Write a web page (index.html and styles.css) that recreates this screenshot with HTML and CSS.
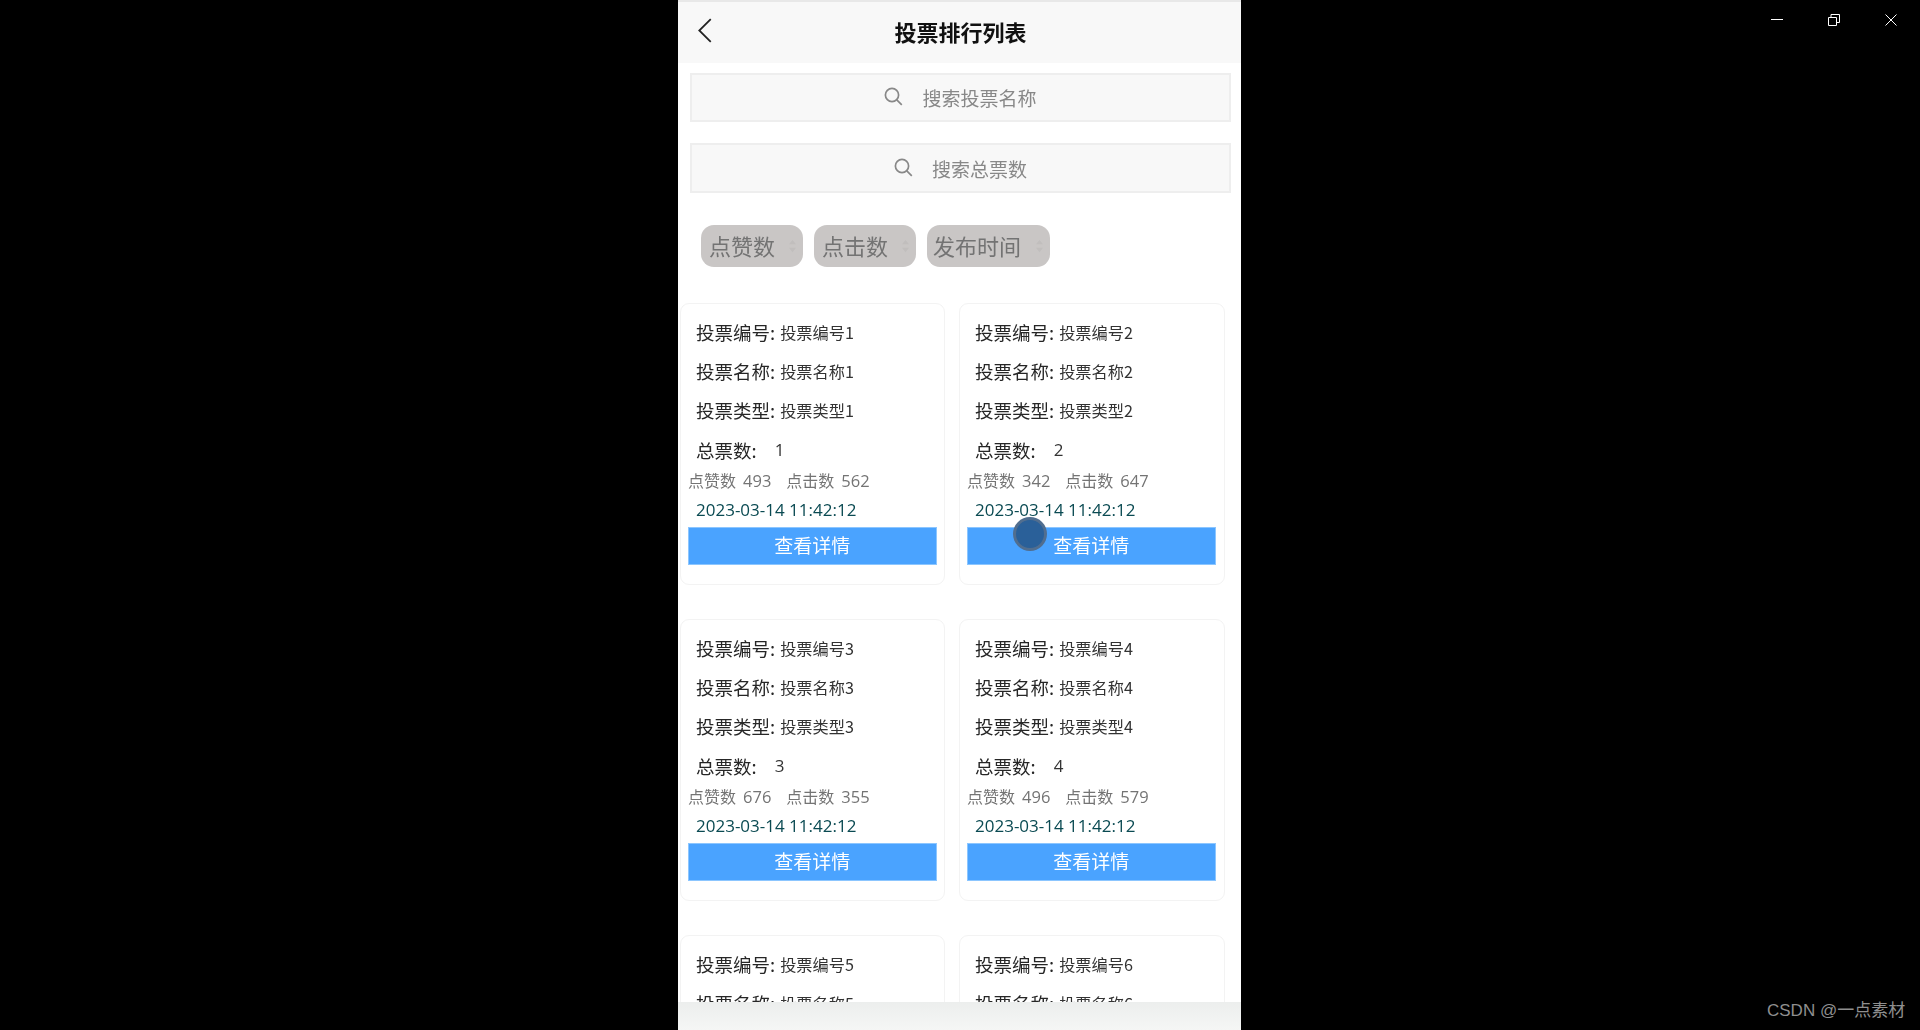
FILE: index.html
```html
<!DOCTYPE html>
<html lang="zh-CN">
<head>
<meta charset="utf-8">
<title>投票排行列表</title>
<link rel="stylesheet" href="styles.css">
</head>
<body>
<div class="stage">
  <main class="phone">
    <div class="scroll">
      <header class="navbar">
        <svg class="back" viewBox="0 0 14 24"><path d="M13 1 2 12l11 11"/></svg>
        <h1>投票排行列表</h1>
      </header>
      <div class="search first">
        <svg class="glass" viewBox="0 0 19 19"><circle cx="8" cy="8" r="6.6"/><path d="m12.8 12.8 5 5"/></svg>
        <span>搜索投票名称</span>
      </div>
      <div class="search second">
        <svg class="glass" viewBox="0 0 19 19"><circle cx="8" cy="8" r="6.6"/><path d="m12.8 12.8 5 5"/></svg>
        <span>搜索总票数</span>
      </div>
      <div class="chips">
        <div class="chip w1">点赞数<svg class="sort" viewBox="0 0 10 16"><path d="M5 1 9 6H1zM5 15 1 10h8z"/></svg></div>
        <div class="chip w1">点击数<svg class="sort" viewBox="0 0 10 16"><path d="M5 1 9 6H1zM5 15 1 10h8z"/></svg></div>
        <div class="chip w2">发布时间<svg class="sort" viewBox="0 0 10 16"><path d="M5 1 9 6H1zM5 15 1 10h8z"/></svg></div>
      </div>
      <section class="grid">
        <article class="card">
          <div class="row"><b>投票编号:</b><span>投票编号1</span></div>
          <div class="row"><b>投票名称:</b><span>投票名称1</span></div>
          <div class="row"><b>投票类型:</b><span>投票类型1</span></div>
          <div class="row total"><b>总票数:</b><span>1</span></div>
          <div class="stats"><span>点赞数</span><span class="num">493</span><span>点击数</span><span class="num">562</span></div>
          <div class="date">2023-03-14 11:42:12</div>
          <button class="detail">查看详情</button>
        </article>
        <article class="card">
          <div class="row"><b>投票编号:</b><span>投票编号2</span></div>
          <div class="row"><b>投票名称:</b><span>投票名称2</span></div>
          <div class="row"><b>投票类型:</b><span>投票类型2</span></div>
          <div class="row total"><b>总票数:</b><span>2</span></div>
          <div class="stats"><span>点赞数</span><span class="num">342</span><span>点击数</span><span class="num">647</span></div>
          <div class="date">2023-03-14 11:42:12</div>
          <button class="detail">查看详情</button>
          <i class="touch"></i>
        </article>
        <article class="card">
          <div class="row"><b>投票编号:</b><span>投票编号3</span></div>
          <div class="row"><b>投票名称:</b><span>投票名称3</span></div>
          <div class="row"><b>投票类型:</b><span>投票类型3</span></div>
          <div class="row total"><b>总票数:</b><span>3</span></div>
          <div class="stats"><span>点赞数</span><span class="num">676</span><span>点击数</span><span class="num">355</span></div>
          <div class="date">2023-03-14 11:42:12</div>
          <button class="detail">查看详情</button>
        </article>
        <article class="card">
          <div class="row"><b>投票编号:</b><span>投票编号4</span></div>
          <div class="row"><b>投票名称:</b><span>投票名称4</span></div>
          <div class="row"><b>投票类型:</b><span>投票类型4</span></div>
          <div class="row total"><b>总票数:</b><span>4</span></div>
          <div class="stats"><span>点赞数</span><span class="num">496</span><span>点击数</span><span class="num">579</span></div>
          <div class="date">2023-03-14 11:42:12</div>
          <button class="detail">查看详情</button>
        </article>
        <article class="card">
          <div class="row"><b>投票编号:</b><span>投票编号5</span></div>
          <div class="row"><b>投票名称:</b><span>投票名称5</span></div>
        </article>
        <article class="card">
          <div class="row"><b>投票编号:</b><span>投票编号6</span></div>
          <div class="row"><b>投票名称:</b><span>投票名称6</span></div>
        </article>
      </section>
    </div>
    <div class="tabbar"></div>
  </main>
</div>
<div class="winctl">
  <svg viewBox="0 0 12 12"><path d="M0 5.500h12"/></svg>
  <svg viewBox="0 0 12 12"><path d="M.5 3.5h8v8h-8zM3 3.5V.5h8.500v8h-3"/></svg>
  <svg viewBox="0 0 12 12"><path d="m.5.500 11 11M11.500.500l-11 11"/></svg>
</div>
<div class="mark">CSDN @一点素材</div>
</body>
</html>
```
FILE: styles.css
```css
* { box-sizing: border-box; }
html, body { margin: 0; height: 100%; background: #000; overflow: hidden; }
body { font-family: "Open Sans", "Noto Sans CJK SC", sans-serif; }

.stage { display: flex; justify-content: center; height: 1030px; padding-right: 1px; }
.phone { width: 563px; height: 1030px; background: #fff; display: flex; flex-direction: column; filter: blur(0.35px); }
.scroll { flex: 1; min-height: 0; overflow: hidden; }
.tabbar { height: 28px; background: linear-gradient(#eceeed, #f5f6f5); }

.navbar { height: 63px; background: #f8f8f8; border-top: 2px solid #e8e8e8; display: flex; align-items: center; justify-content: center; position: relative; }
.navbar h1 { margin: 0; font-size: 22px; font-weight: 700; color: #111; line-height: 1; transform: translate(1px, -1px); }
.back { position: absolute; left: 19px; top: 16px; width: 15px; height: 25px; fill: none; stroke: #222; stroke-width: 1.7; }

.search { height: 49px; margin: 10px 10px 0 12px; background: #f8f8f8; border: 2px solid #eeeeee; display: flex; align-items: center; justify-content: center; gap: 19px; color: #888; font-size: 19px; font-family: "Noto Sans CJK SC", sans-serif; }
.search.second { height: 50px; margin-top: 21px; }
.glass { width: 19px; height: 19px; fill: none; stroke: #888; stroke-width: 1.7; transform: translateY(-1px); }

.chips { display: flex; gap: 11px; padding: 32px 0 0 23px; }
.chip { height: 42px; border-radius: 13px; background: #c9c6c5; color: #737373; font-size: 22px; line-height: 42px; padding: 0 0 2px 8px; font-family: "Noto Sans CJK SC", sans-serif; display: flex; align-items: center; position: relative; }
.chip.w1 { width: 102px; }
.chip.w2 { width: 123px; padding-left: 6px; }
.sort { position: absolute; right: 6px; top: 14px; width: 9px; height: 14px; fill: #c1bebd; }

.grid { display: grid; grid-template-columns: 265px 266px; column-gap: 14px; row-gap: 34px; padding: 36px 0 0 2px; }
.card { position: relative; height: 282px; border: 1px solid #f3f3f3; border-radius: 9px; background: #fff; padding: 8px 0 0 7px; }
.row { height: 39.3px; padding-left: 8px; display: flex; align-items: center; font-family: "Noto Sans CJK SC", sans-serif; color: #333; }
.row b { font-weight: 400; font-size: 18.500px; color: #262626; margin-right: 5px; }
.row span { font-size: 16.200px; color: #333; }
.row.total b { margin-right: 18px; }
.row.total span { font-family: "Open Sans", sans-serif; font-size: 17px; }
.stats { height: 22px; display: flex; align-items: center; font-size: 16px; color: #747474; }
.stats .num { margin: 0 15px 0 7px; font-size: 16.500px; }
.stats span { font-family: "Noto Sans CJK SC", sans-serif; }
.stats .num { font-family: "Open Sans", sans-serif; }
.date { height: 35.500px; padding-left: 8px; line-height: 37.500px; font-size: 17px; color: #0a4a52; white-space: nowrap; }
.detail { display: block; width: 248.500px; height: 38.500px; padding: 0 0 2px; border: 1px solid #8cc6ff; background: #4aa3ff; color: #fff; font-size: 19px; font-family: "Noto Sans CJK SC", sans-serif; }
.touch { position: absolute; left: 53px; top: 213px; width: 34px; height: 34px; border-radius: 50%; background: #2a6099; border: 3px solid rgba(95, 115, 140, 0.75); }

.winctl { position: absolute; top: 14px; left: 1771px; display: flex; gap: 45px; }
.winctl svg { width: 12px; height: 12px; fill: none; stroke: #fff; stroke-width: 1; }
.mark { position: absolute; left: 1767px; top: 1000px; color: #8f8f8f; font-size: 17px; line-height: 22px; font-family: "Liberation Sans", "Noto Sans CJK SC", sans-serif; white-space: nowrap; }
```
